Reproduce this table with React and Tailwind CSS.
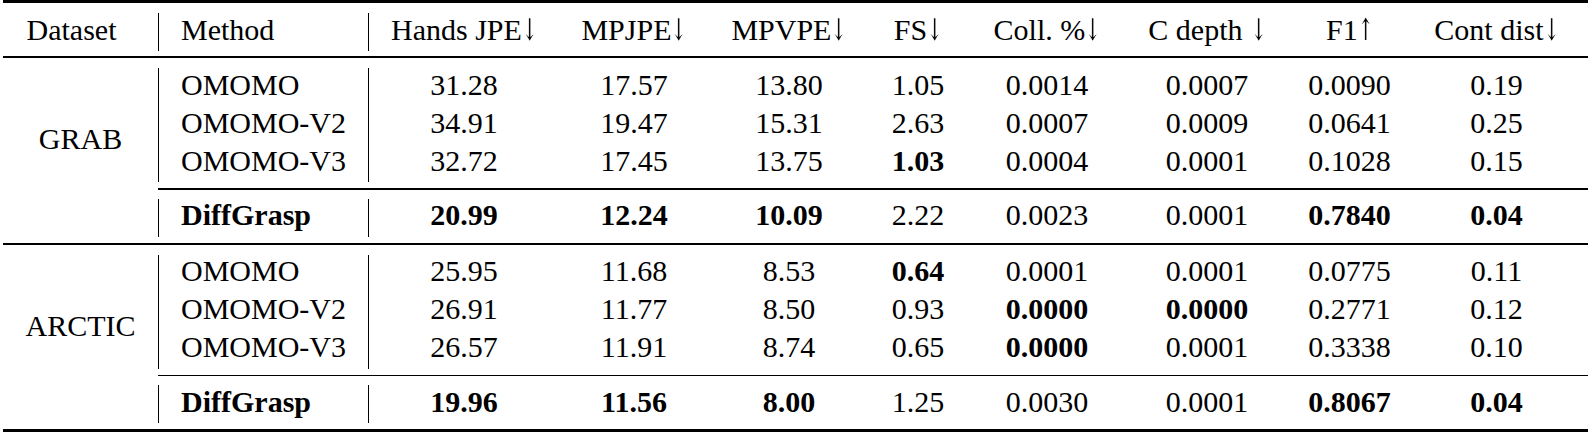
import React from "react";

const W = [155, 210, 191, 150, 160, 98, 160, 160, 125, 169];

const blocks = [
  {
    name: "GRAB",
    rows: [
      ["OMOMO", "31.28", "17.57", "13.80", "1.05", "0.0014", "0.0007", "0.0090", "0.19"],
      ["OMOMO-V2", "34.91", "19.47", "15.31", "2.63", "0.0007", "0.0009", "0.0641", "0.25"],
      ["OMOMO-V3", "32.72", "17.45", "13.75", "*1.03", "0.0004", "0.0001", "0.1028", "0.15"],
    ],
    ours: ["*DiffGrasp", "*20.99", "*12.24", "*10.09", "2.22", "0.0023", "0.0001", "*0.7840", "*0.04"],
  },
  {
    name: "ARCTIC",
    rows: [
      ["OMOMO", "25.95", "11.68", "8.53", "*0.64", "0.0001", "0.0001", "0.0775", "0.11"],
      ["OMOMO-V2", "26.91", "11.77", "8.50", "0.93", "*0.0000", "*0.0000", "0.2771", "0.12"],
      ["OMOMO-V3", "26.57", "11.91", "8.74", "0.65", "*0.0000", "0.0001", "0.3338", "0.10"],
    ],
    ours: ["*DiffGrasp", "*19.96", "*11.56", "*8.00", "1.25", "0.0030", "0.0001", "*0.8067", "*0.04"],
  },
];

function Val({ v }) {
  if (v.startsWith("*")) return <span className="font-bold">{v.slice(1)}</span>;
  return <span>{v}</span>;
}

function Arrow({ up, gap }) {
  return (
    <span
      className={`inline-block mr-[-5px] scale-x-[0.6] text-[30px] text-black will-change-transform ${gap ? "ml-[3px]" : "ml-[-5px]"}`}
      style={{ fontFamily: '"DejaVu Serif", serif' }}
    >
      {up ? "↑" : "↓"}
    </span>
  );
}

function Row({ cells }) {
  return (
    <div className="flex h-[38px]">
      <div
        className="h-full border-l border-black flex items-center pl-[22px] pb-[5px]"
        style={{ width: W[1] }}
      >
        <Val v={cells[0]} />
      </div>
      {cells.slice(1).map((c, i) => (
        <div
          key={i}
          className={`h-full flex items-center justify-center pb-[5px] ${i === 0 ? "border-l border-black" : ""}`}
          style={{ width: W[i + 2] }}
        >
          <Val v={c} />
        </div>
      ))}
    </div>
  );
}

function Block({ b }) {
  return (
    <div className="flex">
      <div className="flex items-center justify-center pb-[22px]" style={{ width: W[0] }}>
        {b.name}
      </div>
      <div className="flex-1">
        <div className="pt-[10px]">
          {b.rows.map((r, i) => (
            <Row key={i} cells={r} />
          ))}
        </div>
        <div className="h-[6px]" />
        <div className="h-[1.5px] bg-black" />
        <div className="h-[9px]" />
        <Row cells={b.ours} />
        <div className="h-[6px]" />
      </div>
    </div>
  );
}

const headers = [
  ["Hands JPE", false, false],
  ["MPJPE", false, false],
  ["MPVPE", false, false],
  ["FS", false, false],
  ["Coll. %", false, false],
  ["C depth", false, true],
  ["F1", true, false],
  ["Cont dist", false, false],
];

export default function App() {
  return (
    <div
      className="w-[1592px] h-[433px] bg-white text-black pl-[3px] pr-[4px] overflow-hidden"
      style={{ fontFamily: '"Liberation Serif", "Times New Roman", serif' }}
    >
      <div className="text-[30px] leading-[38px]">
        <div className="h-[3px] bg-black" />
        <div className="pt-[10px] pb-[5px]">
          <div className="flex h-[38px]">
            <div
              className="h-full flex items-center justify-center pb-[5px] pr-[18px]"
              style={{ width: W[0] }}
            >
              Dataset
            </div>
            <div
              className="h-full border-l border-black flex items-center pl-[22px] pb-[5px]"
              style={{ width: W[1] }}
            >
              Method
            </div>
            {headers.map(([h, up, gap], i) => (
              <div
                key={i}
                className={`h-full flex items-center justify-center whitespace-nowrap pb-[5px] ${i === 0 ? "border-l border-black" : ""}`}
                style={{ width: W[i + 2] }}
              >
                <span>{h}</span>
                <Arrow up={up} gap={gap} />
              </div>
            ))}
          </div>
        </div>
        <div className="h-[2px] bg-black" />
        <Block b={blocks[0]} />
        <div className="h-[2px] bg-black" />
        <Block b={blocks[1]} />
        <div className="h-[3px] bg-black" />
      </div>
    </div>
  );
}
